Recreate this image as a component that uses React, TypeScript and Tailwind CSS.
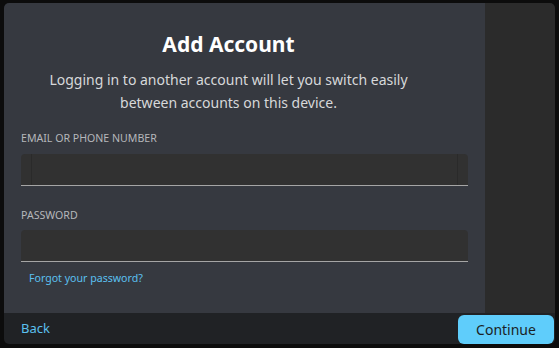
export default function App() {
  return (
    <div className="h-[348px] w-[559px] overflow-hidden bg-[#0c0c0c] pl-[4px] pt-[3px] font-['Noto_Sans',sans-serif]">
      <div className="flex h-[341px] w-[551px] flex-col overflow-hidden rounded-[5px]">
        <div className="flex flex-1">
          <div className="flex w-[481px] flex-col bg-[#363940] px-[17px] pt-[27px]">
            <div className="flex flex-col items-center pr-[32px]">
              <h1 className="text-[21px] font-bold leading-[28px] text-white">Add Account</h1>
              <p className="mt-[10px] text-center text-[14px] leading-[23px] text-[#d7d8da]">
                Logging in to another account will let you switch easily
                <br />
                between accounts on this device.
              </p>
            </div>
            <label className="mt-[17px] text-[10.6px] leading-[14px] text-[#b5b7bb]">EMAIL OR PHONE NUMBER</label>
            <div className="mt-[9px] flex h-[32px] w-[447px] rounded-t-[4px] border-b border-[#a5a5a5] bg-[#313131] px-[10px]">
              <div className="flex-1 border-x border-[#2a2a2a]" />
            </div>
            <label className="mt-[22px] text-[10.6px] leading-[14px] text-[#b5b7bb]">PASSWORD</label>
            <div className="mt-[8px] h-[32px] w-[447px] rounded-t-[4px] border-b border-[#a5a5a5] bg-[#313131]" />
            <a className="ml-[8px] mt-[9px] text-[10.6px] leading-[14px] text-[#5bc0f0]">Forgot your password?</a>
          </div>
          <div className="flex-1 bg-[#2b2b2b]" />
        </div>
        <div className="flex h-[31px] items-center justify-between bg-[#202225]">
          <span className="pl-[17px] text-[13px] text-[#5bc0f0]">Back</span>
          <button className="mr-[1px] mt-[1px] h-[29px] w-[96px] rounded-[6px] bg-[#5fcdfb] text-[14px] text-[#1b1f24]">
            Continue
          </button>
        </div>
      </div>
    </div>
  )
}
